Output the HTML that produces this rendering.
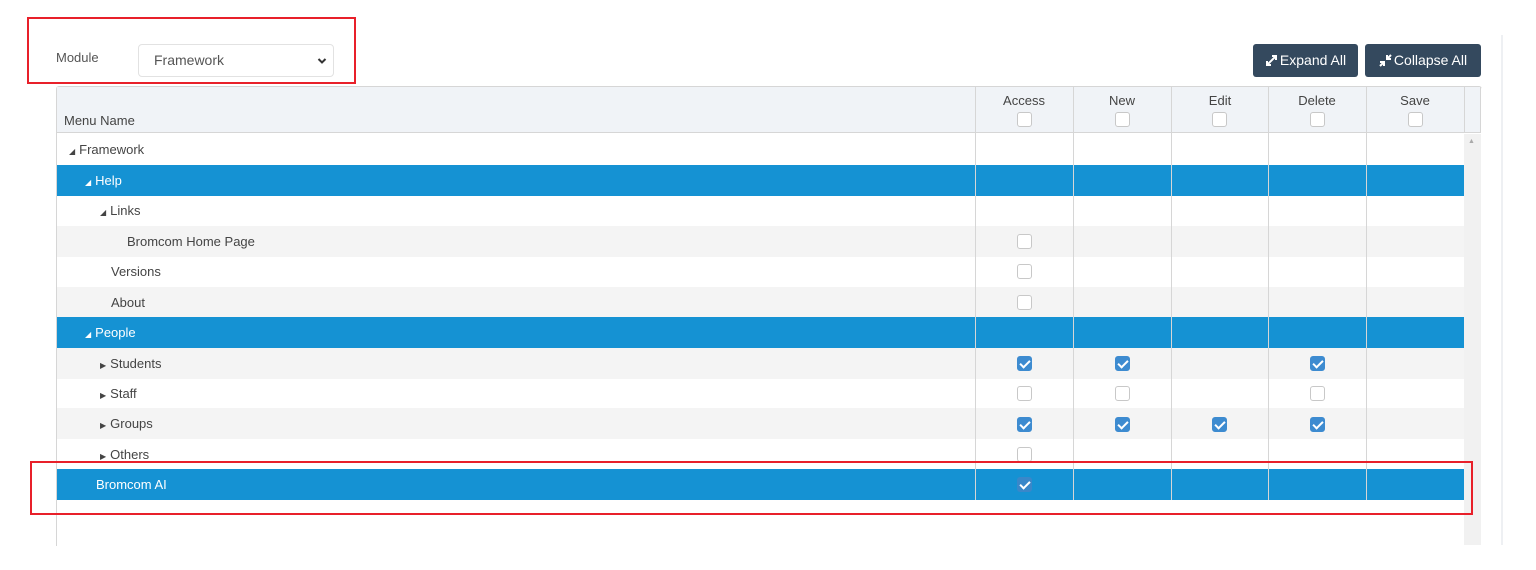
<!DOCTYPE html>
<html><head><style>
*{box-sizing:border-box;margin:0;padding:0}
body{width:1536px;height:570px;background:#fff;font-family:"Liberation Sans",sans-serif;position:relative;overflow:hidden;color:#444}
.a{position:absolute}
.red{position:absolute;border:2px solid #e8202a}
.btn{position:absolute;top:44px;height:33px;background:#34495e;color:#fff;border-radius:3px;font-size:14px;line-height:33px;text-align:center}
.btn svg{vertical-align:-2px;margin-right:2px}
.row{position:absolute;left:57px;width:1407px;height:31px;font-size:13px;line-height:31px}
.blue{background:#1592d3;color:#fff}
.gray{background:#f4f4f4}
.vl{position:absolute;top:86px;width:1px;background:#d6d6d6}
.cb{position:absolute;width:15px;height:15px;border:1px solid #c8c8c8;border-radius:3px;background:#fff}
.ck{background:#3d8bd0;border-color:#3d8bd0}
.ck:after{content:"";position:absolute;left:4px;top:1px;width:4px;height:8px;border:solid #fff;border-width:0 2px 2px 0;transform:rotate(45deg)}
.th{position:absolute;top:93px;font-size:13px;color:#444;text-align:center;width:98px}
.tri{font-size:8px;margin-right:4px}
</style></head><body>
<div class="red" style="left:27px;top:17px;width:329px;height:67px"></div>
<div class="a" style="left:56px;top:50px;font-size:13px;color:#555">Module</div>
<div class="a" style="left:138px;top:44px;width:196px;height:33px;border:1px solid #e2e2e2;border-radius:4px;font-size:14px;line-height:31px;padding-left:15px;color:#555">Framework<svg style="position:absolute;right:6px;top:12px" width="10" height="8" viewBox="0 0 10 8"><path d="M1.5 2 L5 5.5 L8.5 2" fill="none" stroke="#333" stroke-width="2"/></svg></div>
<div class="btn" style="left:1253px;width:105px"><svg width="13" height="13" viewBox="0 0 13 13"><path d="M2 11 L11 2 M7 2 H11 V6 M2 7 V11 H6" fill="none" stroke="#fff" stroke-width="2"/></svg>Expand All</div>
<div class="btn" style="left:1365px;width:116px"><svg width="13" height="13" viewBox="0 0 13 13"><path d="M1 12 L5 8 M12 1 L8 5 M8 1 V5 H12 M1 8 H5 V12" fill="none" stroke="#fff" stroke-width="2"/></svg>Collapse All</div>
<div class="a" style="left:1501px;top:35px;width:2px;height:510px;background:#eef0f3"></div>
<div class="a" style="left:56px;top:86px;width:1426px;height:460px;border:1px solid #d6d6d6;border-bottom:none;border-right:none;border-radius:3px 3px 0 0"></div>
<div class="a" style="left:57px;top:87px;width:1424px;height:46px;background:#f0f3f7;border-bottom:1px solid #d6d6d6;border-right:1px solid #d6d6d6"></div>
<div class="a" style="left:64px;top:113px;font-size:13px;color:#444">Menu Name</div>
<div class="a" style="left:1464px;top:134px;width:17px;height:411px;background:#f1f1f1"></div>
<div class="a" style="left:1468px;top:138px;font-size:7px;color:#aaa">&#9650;</div>
<div class="row" style="top:134px"><span style="margin-left:12px"><span class="tri">&#9698;</span>Framework</span></div>
<div class="row blue" style="top:165px"><span style="margin-left:28px"><span class="tri">&#9698;</span>Help</span></div>
<div class="row" style="top:195px"><span style="margin-left:43px"><span class="tri">&#9698;</span>Links</span></div>
<div class="row gray" style="top:226px"><span style="margin-left:70px">Bromcom Home Page</span></div>
<div class="row" style="top:256px"><span style="margin-left:54px">Versions</span></div>
<div class="row gray" style="top:287px"><span style="margin-left:54px">About</span></div>
<div class="row blue" style="top:317px"><span style="margin-left:28px"><span class="tri">&#9698;</span>People</span></div>
<div class="row gray" style="top:348px"><span style="margin-left:43px"><span class="tri">&#9654;</span>Students</span></div>
<div class="row" style="top:378px"><span style="margin-left:43px"><span class="tri">&#9654;</span>Staff</span></div>
<div class="row gray" style="top:408px"><span style="margin-left:43px"><span class="tri">&#9654;</span>Groups</span></div>
<div class="row" style="top:439px"><span style="margin-left:43px"><span class="tri">&#9654;</span>Others</span></div>
<div class="row blue" style="top:469px"><span style="margin-left:39px">Bromcom AI</span></div>
<div class="vl" style="left:975px;height:414px"></div>
<div class="vl" style="left:1073px;height:414px"></div>
<div class="vl" style="left:1171px;height:414px"></div>
<div class="vl" style="left:1268px;height:414px"></div>
<div class="vl" style="left:1366px;height:414px"></div>
<div class="vl" style="left:1464px;height:47px"></div>
<div class="th" style="left:975px">Access</div>
<div class="th" style="left:1073px">New</div>
<div class="th" style="left:1171px">Edit</div>
<div class="th" style="left:1268px">Delete</div>
<div class="th" style="left:1366px">Save</div>
<div class="cb" style="left:1017px;top:112px"></div>
<div class="cb" style="left:1115px;top:112px"></div>
<div class="cb" style="left:1212px;top:112px"></div>
<div class="cb" style="left:1310px;top:112px"></div>
<div class="cb" style="left:1408px;top:112px"></div>
<div class="cb" style="left:1017px;top:234px"></div>
<div class="cb" style="left:1017px;top:264px"></div>
<div class="cb" style="left:1017px;top:295px"></div>
<div class="cb ck" style="left:1017px;top:356px"></div>
<div class="cb ck" style="left:1115px;top:356px"></div>
<div class="cb ck" style="left:1310px;top:356px"></div>
<div class="cb" style="left:1017px;top:386px"></div>
<div class="cb" style="left:1115px;top:386px"></div>
<div class="cb" style="left:1310px;top:386px"></div>
<div class="cb ck" style="left:1017px;top:417px"></div>
<div class="cb ck" style="left:1115px;top:417px"></div>
<div class="cb ck" style="left:1212px;top:417px"></div>
<div class="cb ck" style="left:1310px;top:417px"></div>
<div class="cb" style="left:1017px;top:447px"></div>
<div class="cb ck" style="left:1017px;top:477px;background:#3a87c9;border-color:#3a87c9"></div>
<div class="red" style="left:30px;top:461px;width:1443px;height:54px"></div>
</body></html>
